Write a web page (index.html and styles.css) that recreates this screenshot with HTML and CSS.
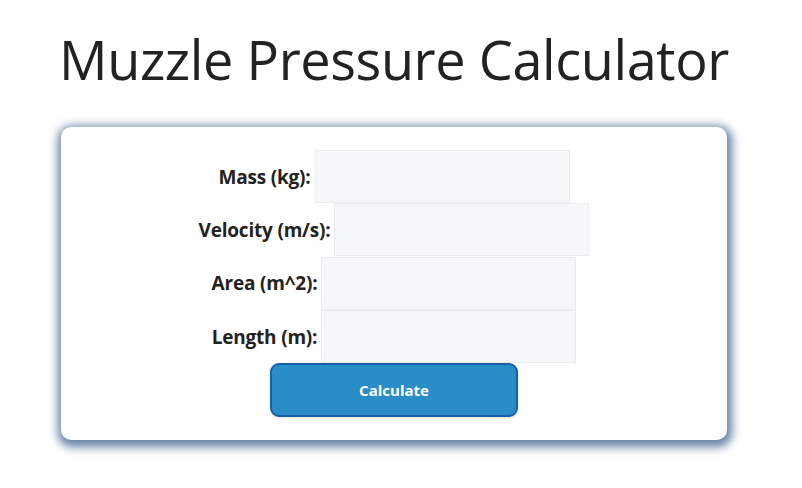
FILE: index.html
```html
<!DOCTYPE html>
<html>
<head>
<meta charset="utf-8">
<link rel="stylesheet" href="styles.css">
</head>
<body>
<div class="page">
  <h1 class="title">Muzzle Pressure Calculator</h1>
  <div class="card">
    <div class="row"><label class="label">Mass (kg):</label><input class="field" type="text"></div>
    <div class="row"><label class="label">Velocity (m/s):</label><input class="field" type="text"></div>
    <div class="row"><label class="label">Area (m^2):</label><input class="field" type="text"></div>
    <div class="row"><label class="label">Length (m):</label><input class="field" type="text"></div>
    <div class="row"><button class="btn" type="button">Calculate</button></div>
  </div>
</div>
</body>
</html>
```
FILE: styles.css
```css
html, body {
  margin: 0;
  padding: 0;
  background: #ffffff;
}
body {
  font-family: "Open Sans", "Noto Sans", sans-serif;
  color: #222222;
  min-height: 488px;
}
.page {
  width: 788px;
  padding-bottom: 40px;
  display: flex;
  flex-direction: column;
  align-items: center;
}
.title {
  margin: 19px 0 0 0;
  font-weight: 400;
  font-size: 54px;
  line-height: 80px;
  color: #222222;
  letter-spacing: -0.4px;
}
.card {
  margin-top: 28px;
  width: 666px;
  box-sizing: border-box;
  height: 313px;
  padding: 23px 0;
  background: #ffffff;
  border-radius: 10px;
  box-shadow: 1px 3px 10px 4px rgba(62, 98, 140, 0.8);
  display: flex;
  flex-direction: column;
  align-items: center;
}
.row {
  display: flex;
  align-items: center;
  gap: 4px;
  height: 53.3px;
}
.label {
  font-weight: 700;
  font-size: 19px;
  color: #222222;
  letter-spacing: -0.2px;
}
.field {
  width: 255px;
  height: 53px;
  box-sizing: border-box;
  background: #f6f7f9;
  border: 1px solid #ececee;
  margin: 0;
  padding: 0 10px;
  outline: none;
}
.btn {
  width: 248px;
  height: 54px;
  margin-top: 0;
  background: #2b8dc8;
  border: 2px solid #1660a6;
  border-radius: 9px;
  color: #ffffff;
  font-family: "Open Sans", "Noto Sans", sans-serif;
  font-weight: 700;
  font-size: 15px;
  padding-top: 2px;
  box-shadow: 0 1px 3px rgba(0, 0, 0, 0.15);
}
```
